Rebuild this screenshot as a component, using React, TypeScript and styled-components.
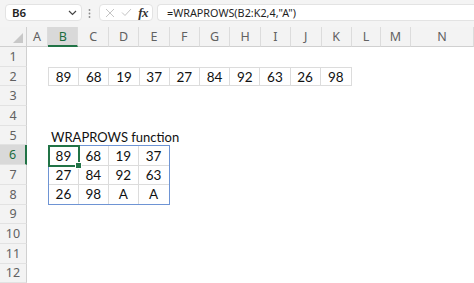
import React from "react";
import styled, { createGlobalStyle } from "styled-components";

const GlobalStyle = createGlobalStyle`
  html, body {
    margin: 0;
    padding: 0;
    background: #ffffff;
  }
`;

const COLUMNS = ["A", "B", "C", "D", "E", "F", "G", "H", "I", "J", "K", "L", "M", "N"];
const ROW_DATA = [89, 68, 19, 37, 27, 84, 92, 63, 26, 98];
const WRAPPED = [
  ["89", "68", "19", "37"],
  ["27", "84", "92", "63"],
  ["26", "98", "A", "A"],
];
const ACTIVE_COL = "B";
const ACTIVE_ROW = 6;

const Window = styled.div`
  width: 474px;
  height: 283px;
  overflow: hidden;
  display: flex;
  flex-direction: column;
  background: #ffffff;
`;

const FormulaBar = styled.div`
  height: 27px;
  flex: none;
  display: flex;
  align-items: flex-start;
  padding: 4px 0 0 5px;
  box-sizing: border-box;
  background: #f4f4f4;
`;

const Field = styled.div`
  height: 17px;
  box-sizing: border-box;
  background: #ffffff;
  border: 1px solid #e3e3e3;
  border-radius: 4px;
  display: flex;
  align-items: center;
`;

const NameBox = styled(Field)`
  width: 77px;
  justify-content: space-between;
  padding: 0 4px 0 6px;
  font-family: "Noto Sans", sans-serif;
  font-size: 11.5px;
  font-weight: 600;
  color: #222;
`;

const Grip = styled.div`
  width: 14px;
  display: flex;
  justify-content: center;
  padding-top: 5px;
`;

const FxBox = styled(Field)`
  width: 54px;
  margin-left: 3px;
  padding: 0 4px 0 5px;
  gap: 6px;
  justify-content: space-between;
`;

const FxLabel = styled.span`
  font-family: "Liberation Serif", serif;
  font-style: italic;
  font-size: 13px;
  font-weight: 700;
  color: #333;
  letter-spacing: -0.5px;
`;

const FormulaInput = styled(Field)`
  flex: 1;
  margin-left: 4px;
  border-right: none;
  border-radius: 4px 0 0 4px;
  padding-left: 9px;
  font-family: "Noto Sans", sans-serif;
  font-size: 10.8px;
  color: #1f1f1f;
  white-space: nowrap;
`;

const Sheet = styled.div`
  flex: 1;
  display: grid;
  grid-template-columns: 27px 21px repeat(10, 30.4px) 29px 30px 1fr;
  grid-template-rows: 20px repeat(12, 19.7px);
  font-family: "Noto Sans", sans-serif;
`;

const Corner = styled.div`
  grid-column: 1;
  grid-row: 1;
  background: #f3f3f3;
  border-right: 1px solid #d0d0d0;
  border-bottom: 1px solid #d0d0d0;
  box-sizing: border-box;
  display: flex;
  align-items: flex-end;
  justify-content: flex-end;
  padding: 0 3px 3px 0;
`;

const ColHeader = styled.div<{ $active?: boolean }>`
  grid-row: 1;
  display: flex;
  align-items: center;
  justify-content: center;
  box-sizing: border-box;
  font-size: 12.5px;
  color: ${(p) => (p.$active ? "#1b6d3e" : "#616161")};
  background: ${(p) => (p.$active ? "#d9d9d9" : "#f3f3f3")};
  border-right: 1px solid #dcdcdc;
  border-bottom: ${(p) => (p.$active ? "2px solid #217346" : "1px solid #d0d0d0")};
`;

const RowHeader = styled.div<{ $active?: boolean }>`
  grid-column: 1;
  display: flex;
  align-items: center;
  justify-content: center;
  box-sizing: border-box;
  font-size: 12.5px;
  color: ${(p) => (p.$active ? "#1b6d3e" : "#616161")};
  background: ${(p) => (p.$active ? "#d9d9d9" : "#f3f3f3")};
  border-bottom: 1px solid #e2e2e2;
  border-right: ${(p) => (p.$active ? "2px solid #217346" : "1px solid #d0d0d0")};
`;

const Label = styled.div`
  grid-column: 3 / 8;
  grid-row: 6;
  display: flex;
  align-items: center;
  padding: 2px 0 0 3px;
  font-family: "Lato", sans-serif;
  font-size: 13px;
  color: #111;
  white-space: nowrap;
`;

const Block = styled.div<{ $cols: number; $outline: string }>`
  display: grid;
  grid-template-columns: repeat(${(p) => p.$cols}, 1fr);
  border: 1px solid ${(p) => p.$outline};
  box-sizing: border-box;
`;

const Cell = styled.div<{ $lastCol?: boolean; $lastRow?: boolean; $selected?: boolean }>`
  position: relative;
  display: flex;
  align-items: center;
  justify-content: center;
  box-sizing: border-box;
  font-family: "Lato", sans-serif;
  font-size: 13.5px;
  color: #111;
  border-right: ${(p) => (p.$lastCol ? "none" : "1px solid #dcdcdc")};
  border-bottom: ${(p) => (p.$lastRow ? "none" : "1px solid #dcdcdc")};
  ${(p) =>
    p.$selected &&
    `
    outline: 2px solid #217346;
    outline-offset: -1px;
    z-index: 1;
  `}
`;

const Handle = styled.span`
  position: absolute;
  right: -4px;
  bottom: -4px;
  width: 5px;
  height: 5px;
  background: #217346;
  border: 1px solid #ffffff;
`;

const Chevron = () => (
  <svg width="9" height="6" viewBox="0 0 9 6">
    <path d="M1 1 L4.5 4.5 L8 1" fill="none" stroke="#444" strokeWidth="1.2" />
  </svg>
);

const Dots = () => (
  <svg width="3" height="9" viewBox="0 0 3 9">
    <circle cx="1.5" cy="1" r="0.9" fill="#8a8a8a" />
    <circle cx="1.5" cy="4.5" r="0.9" fill="#8a8a8a" />
    <circle cx="1.5" cy="8" r="0.9" fill="#8a8a8a" />
  </svg>
);

const Cross = () => (
  <svg width="10" height="10" viewBox="0 0 10 10">
    <path d="M1 1 L9 9 M9 1 L1 9" stroke="#c4c4c4" strokeWidth="1" />
  </svg>
);

const Check = () => (
  <svg width="11" height="9" viewBox="0 0 11 9">
    <path d="M1 4.5 L4 7.5 L10 1" fill="none" stroke="#c4c4c4" strokeWidth="1" />
  </svg>
);

const SelectAll = () => (
  <svg width="10" height="10" viewBox="0 0 10 10">
    <path d="M10 0 L10 10 L0 10 Z" fill="#c8c8c8" />
  </svg>
);

export default function App() {
  return (
    <>
      <GlobalStyle />
      <Window>
        <FormulaBar>
          <NameBox>
            B6
            <Chevron />
          </NameBox>
          <Grip>
            <Dots />
          </Grip>
          <FxBox>
            <Cross />
            <Check />
            <FxLabel>fx</FxLabel>
          </FxBox>
          <FormulaInput>=WRAPROWS(B2:K2,4,"A")</FormulaInput>
        </FormulaBar>

        <Sheet>
          <Corner>
            <SelectAll />
          </Corner>
          {COLUMNS.map((c, i) => (
            <ColHeader key={c} $active={c === ACTIVE_COL} style={{ gridColumn: i + 2 }}>
              {c}
            </ColHeader>
          ))}
          {Array.from({ length: 12 }, (_, i) => (
            <RowHeader key={i} $active={i + 1 === ACTIVE_ROW} style={{ gridRow: i + 2 }}>
              {i + 1}
            </RowHeader>
          ))}

          <Block $cols={10} $outline="#dcdcdc" style={{ gridColumn: "3 / 13", gridRow: 3 }}>
            {ROW_DATA.map((v, i) => (
              <Cell key={i} $lastCol={i === 9} $lastRow>
                {v}
              </Cell>
            ))}
          </Block>

          <Label>WRAPROWS function</Label>

          <Block $cols={4} $outline="#6e94d4" style={{ gridColumn: "3 / 7", gridRow: "7 / 10" }}>
            {WRAPPED.map((row, r) =>
              row.map((v, c) => (
                <Cell
                  key={`${r}-${c}`}
                  $lastCol={c === 3}
                  $lastRow={r === 2}
                  $selected={r === 0 && c === 0}
                >
                  {v}
                  {r === 0 && c === 0 && <Handle />}
                </Cell>
              ))
            )}
          </Block>
        </Sheet>
      </Window>
    </>
  );
}
